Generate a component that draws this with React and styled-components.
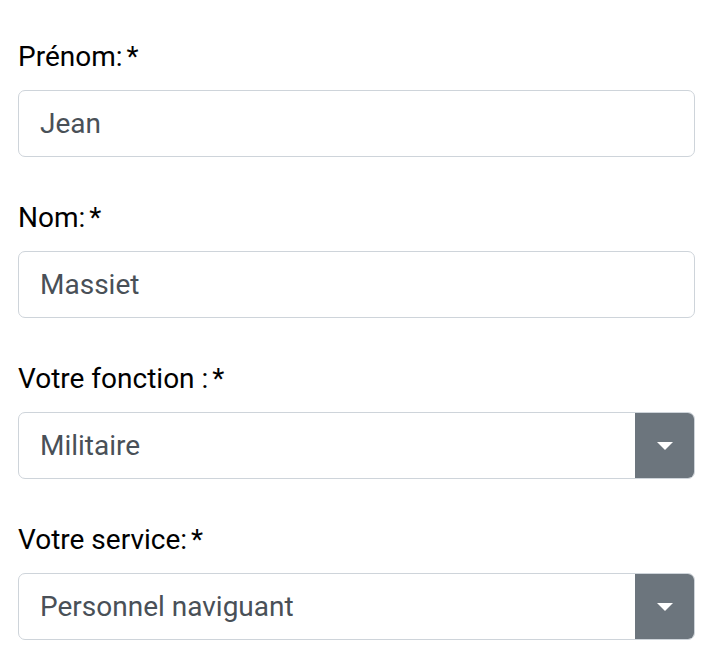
import React from "react";
import styled, { createGlobalStyle } from "styled-components";

const Global = createGlobalStyle`
  html, body { margin: 0; padding: 0; background: #fff; }
  body { font-family: Roboto, "Liberation Sans", Arial, sans-serif; }
  * { box-sizing: border-box; }
`;

const Form = styled.form`
  display: flex;
  flex-direction: column;
  gap: 40px;
  padding: 36px 20px 0 18px;
`;

const Group = styled.div`
  display: flex;
  flex-direction: column;
  gap: 12px;
`;

const Label = styled.label`
  font-size: 28px;
  line-height: 42px;
  color: #000;
  height: 42px;
`;

const Required = styled.span`
  margin-left: 4px;
`;

const Input = styled.input`
  display: block;
  width: 100%;
  height: 67px;
  padding: 0 21px;
  font-family: inherit;
  font-size: 28px;
  color: #495057;
  background: #fff;
  border: 1px solid #ced4da;
  border-radius: 7px;
  outline: none;
`;

const SelectBox = styled.div`
  display: flex;
  height: 67px;
  border: 1px solid #ced4da;
  border-radius: 7px;
  overflow: hidden;
  background: #fff;
`;

const SelectValue = styled.div`
  flex: 1;
  display: flex;
  align-items: center;
  padding: 0 21px;
  font-size: 28px;
  color: #495057;
`;

const Caret = styled.div`
  width: 60px;
  margin: -1px -1px -1px 0;
  background: #6c757d;
  border-radius: 0 7px 7px 0;
  display: flex;
  align-items: center;
  justify-content: center;
`;

function Field({ label, value, select }) {
  return (
    <Group>
      <Label>
        {label}
        <Required>*</Required>
      </Label>
      {select ? (
        <SelectBox>
          <SelectValue>{value}</SelectValue>
          <Caret>
            <svg width="18" height="10" viewBox="0 0 18 10">
              <path d="M1 1 L17 1 L9 9 Z" fill="#fff" />
            </svg>
          </Caret>
        </SelectBox>
      ) : (
        <Input defaultValue={value} readOnly />
      )}
    </Group>
  );
}

export default function App() {
  return (
    <>
      <Global />
      <Form>
        <Field label="Prénom:" value="Jean" />
        <Field label="Nom:" value="Massiet" />
        <Field label="Votre fonction :" value="Militaire" select />
        <Field label="Votre service:" value="Personnel naviguant" select />
      </Form>
    </>
  );
}
